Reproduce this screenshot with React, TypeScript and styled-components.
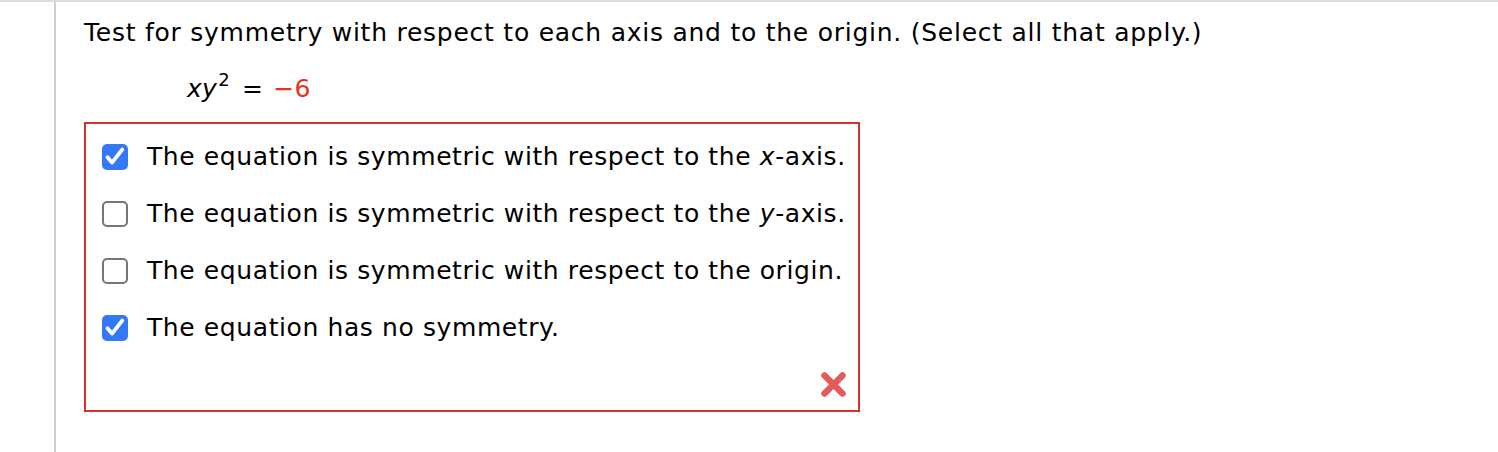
import React from "react";
import styled, { createGlobalStyle } from "styled-components";

const GlobalStyle = createGlobalStyle`
  html, body {
    margin: 0;
    padding: 0;
    background: #fff;
  }
  body {
    font-family: "DejaVu Sans", Verdana, sans-serif;
    color: #000;
  }
`;

const Page = styled.div`
  border-top: 2px solid #dcdcdc;
  height: 450px;
  padding-left: 54px;
`;

const Panel = styled.div`
  border-left: 2px solid #cfcfcf;
  height: 100%;
  padding: 17px 0 0 28px;
  box-sizing: border-box;
`;

const Prompt = styled.div`
  font-size: 25px;
  line-height: 28px;
  letter-spacing: 0.75px;
  white-space: nowrap;
`;

const Equation = styled.div`
  margin: 28px 0 0 103px;
  height: 28px;
  font-size: 25px;
  line-height: 28px;
  letter-spacing: 0.3px;
  white-space: nowrap;
`;

const Var = styled.i`
  font-style: italic;
`;

const Sup = styled.sup`
  font-size: 18px;
  line-height: 0;
  vertical-align: 11px;
  margin-left: 1px;
`;

const Op = styled.span`
  margin: 0 10px 0 12px;
`;

const Answer = styled.span`
  color: #e8301c;
`;

const AnswerBox = styled.div`
  margin-top: 19px;
  width: 776px;
  box-sizing: border-box;
  border: 2px solid #d2342b;
  padding: 19px 11px 12px 16px;
  display: flex;
  flex-direction: column;
`;

const Options = styled.div`
  display: flex;
  flex-direction: column;
  gap: 29px;
`;

const Option = styled.label`
  display: flex;
  align-items: center;
  gap: 19px;
  font-size: 25px;
  line-height: 28px;
  letter-spacing: 0.6px;
  white-space: nowrap;
`;

const Box = styled.span<{ $checked: boolean }>`
  width: 26px;
  height: 26px;
  box-sizing: border-box;
  border-radius: 5px;
  flex: none;
  display: flex;
  background: ${(p) => (p.$checked ? "#3478f6" : "#fff")};
  border: ${(p) => (p.$checked ? "none" : "2px solid #767676")};
`;

const Footer = styled.div`
  margin-top: 29px;
  display: flex;
  justify-content: flex-end;
`;

const Check = () => (
  <svg width="26" height="26" viewBox="0 0 26 26">
    <path
      d="M5.5 13.2 L10 18.6 L20.2 5.6"
      fill="none"
      stroke="#fff"
      strokeWidth="3.8"
      strokeLinecap="round"
      strokeLinejoin="round"
    />
  </svg>
);

const WrongMark = () => (
  <svg width="27" height="27" viewBox="0 0 27 27">
    <g
      stroke="#e35b5b"
      strokeWidth="6.5"
      strokeLinecap="round"
      style={{ filter: "blur(0.6px)" }}
    >
      <line x1="4.5" y1="4.5" x2="22.5" y2="22.5" />
      <line x1="22.5" y1="4.5" x2="4.5" y2="22.5" />
    </g>
  </svg>
);

const options: { checked: boolean; text: React.ReactNode }[] = [
  {
    checked: true,
    text: (
      <>
        The equation is symmetric with respect to the <Var>x</Var>-axis.
      </>
    ),
  },
  {
    checked: false,
    text: (
      <>
        The equation is symmetric with respect to the <Var>y</Var>-axis.
      </>
    ),
  },
  { checked: false, text: "The equation is symmetric with respect to the origin." },
  { checked: true, text: "The equation has no symmetry." },
];

export default function App() {
  return (
    <>
      <GlobalStyle />
      <Page>
        <Panel>
          <Prompt>
            Test for symmetry with respect to each axis and to the origin. (Select all that apply.)
          </Prompt>
          <Equation>
            <Var>xy</Var>
            <Sup>2</Sup>
            <Op>=</Op>
            <Answer>−6</Answer>
          </Equation>
          <AnswerBox>
            <Options>
              {options.map((o, i) => (
                <Option key={i}>
                  <Box $checked={o.checked}>{o.checked && <Check />}</Box>
                  <span>{o.text}</span>
                </Option>
              ))}
            </Options>
            <Footer>
              <WrongMark />
            </Footer>
          </AnswerBox>
        </Panel>
      </Page>
    </>
  );
}
